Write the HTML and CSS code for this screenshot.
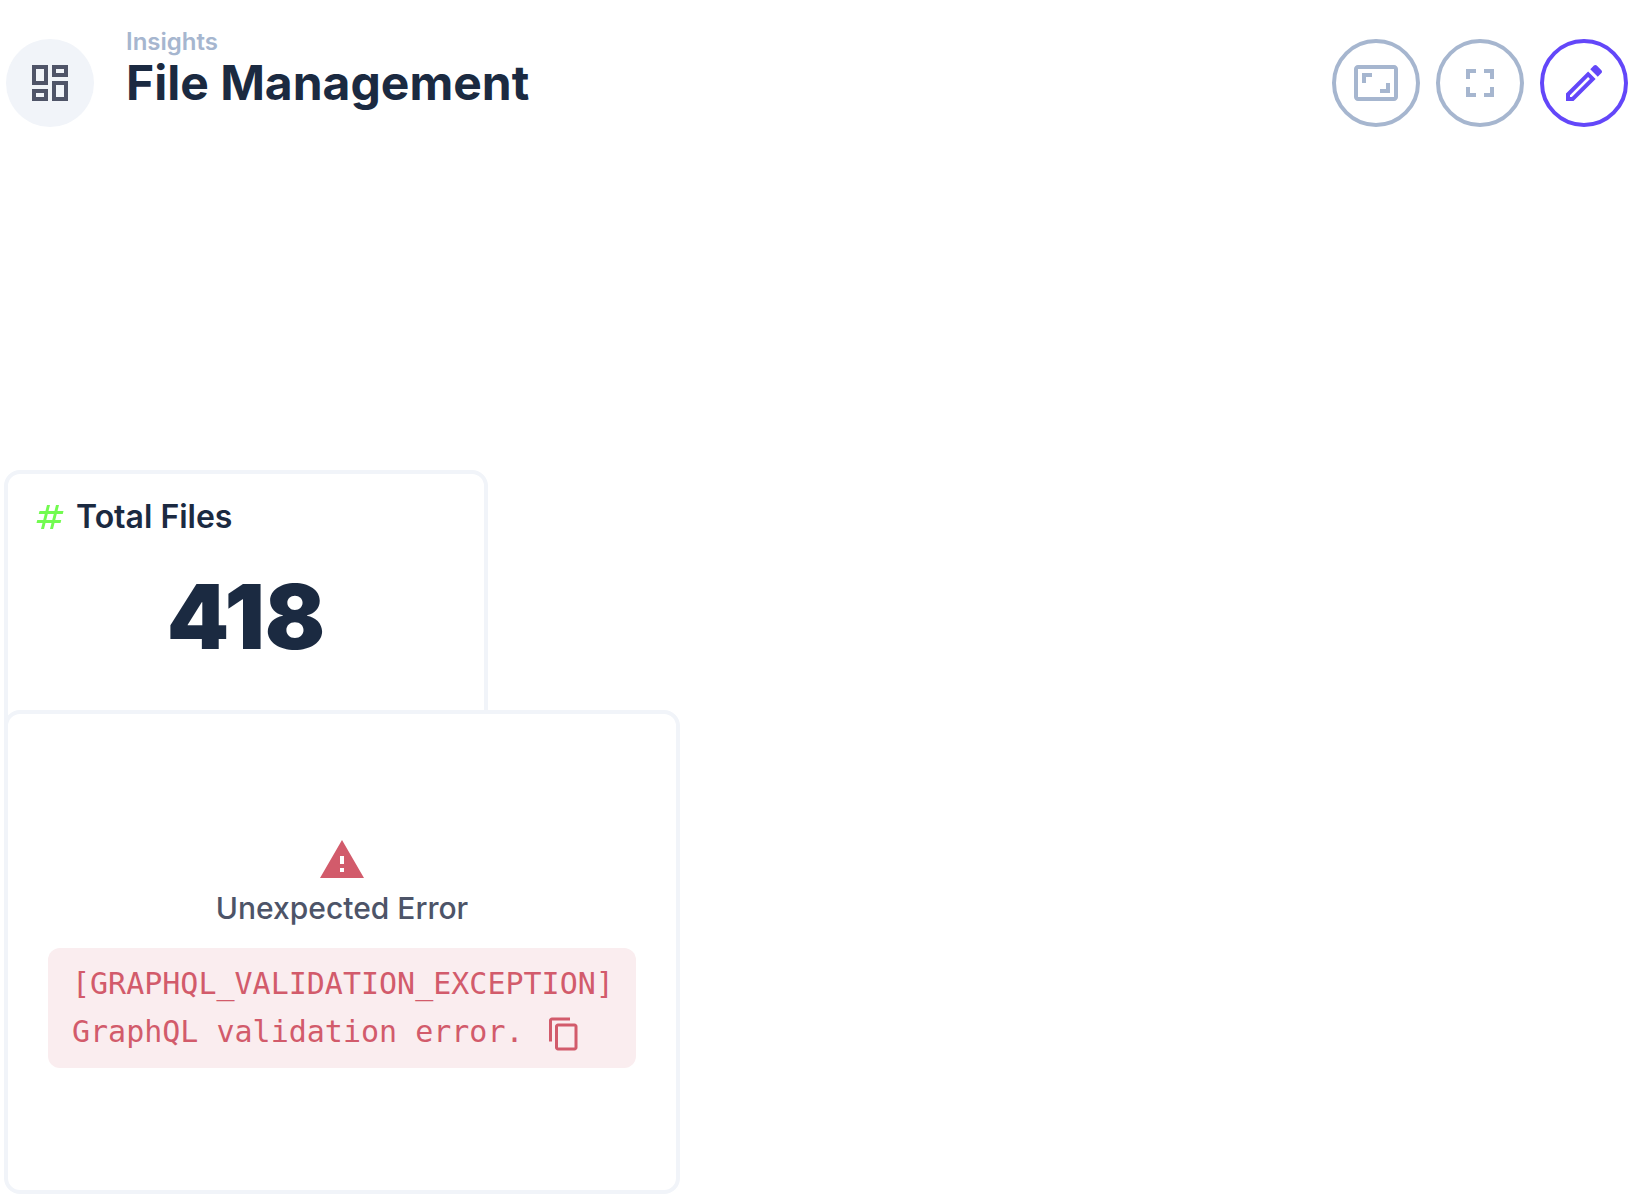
FILE: index.html
```html
<!DOCTYPE html>
<html lang="en">
<head>
<meta charset="utf-8">
<title>File Management</title>
<link rel="stylesheet" href="styles.css">
</head>
<body>
<header class="header">
  <div class="title-group">
    <span class="avatar">
      <svg class="icon-48" viewBox="0 0 24 24"><path d="M19 5v2h-4V5h4M9 5v6H5V5h4m10 8v6h-4v-6h4M9 17v2H5v-2h4M21 3h-8v6h8V3zM11 3H3v10h8V3zm10 8h-8v10h8V11zm-10 4H3v6h8v-6z"/></svg>
    </span>
    <div class="titles">
      <div class="eyebrow">Insights</div>
      <h1 class="title">File Management</h1>
    </div>
  </div>
  <div class="actions">
    <button class="round-btn"><svg class="icon-48" viewBox="0 0 24 24"><path d="M19 12h-2v3h-3v2h5v-5zM7 9h3V7H5v5h2V9zm14-6H3c-1.1 0-2 .9-2 2v14c0 1.1.9 2 2 2h18c1.1 0 2-.9 2-2V5c0-1.1-.9-2-2-2zm0 16.01H3V4.99h18v14.02z"/></svg></button>
    <button class="round-btn"><svg class="icon-48" viewBox="0 0 24 24"><path d="M7 14H5v5h5v-2H7v-3zm-2-4h2V7h3V5H5v5zm12 7h-3v2h5v-5h-2v3zM14 5v2h3v3h2V5h-5z"/></svg></button>
    <button class="round-btn round-btn-primary"><svg class="icon-48" viewBox="0 0 24 24"><path d="M3 17.25V21h3.75L17.81 9.94l-3.75-3.75L3 17.25zM5.92 19H5v-.92l9.06-9.06.92.92L5.92 19zM20.71 5.63l-2.34-2.34c-.39-.39-1.02-.39-1.41 0l-1.83 1.83 3.75 3.75 1.83-1.83c.39-.39.39-1.02 0-1.41z"/></svg></button>
  </div>
</header>
<main class="dashboard">
  <section class="card stat-card">
    <div class="card-head">
      <svg class="icon-hash" viewBox="0 0 24 24"><path d="M20.5 10l.5-2h-4l1-4h-2l-1 4h-4l1-4h-2L9 8H5l-.5 2h4l-1 4h-4L3 16h4l-1 4h2l1-4h4l-1 4h2l1-4h4l.5-2h-4l1-4h4zm-7 4h-4l1-4h4l-1 4z"/></svg>
      <span class="card-title">Total Files</span>
    </div>
    <div class="stat-value">418</div>
  </section>
  <section class="card error-card">
    <svg class="icon-warning" viewBox="0 0 24 24"><path d="M1 21h22L12 2 1 21zm12-3h-2v-2h2v2zm0-4h-2v-4h2v4z"/></svg>
    <div class="error-title">Unexpected Error</div>
    <div class="error-box">[GRAPHQL_VALIDATION_EXCEPTION] GraphQL validation error.<svg class="icon-copy" viewBox="0 0 24 24"><path d="M16 1H4c-1.1 0-2 .9-2 2v14h2V3h12V1zm3 4H8c-1.1 0-2 .9-2 2v14c0 1.1.9 2 2 2h11c1.1 0 2-.9 2-2V7c0-1.1-.9-2-2-2zm0 16H8V7h11v14z"/></svg></div>
  </section>
</main>
</body>
</html>
```
FILE: styles.css
```css
* { box-sizing: border-box; }
html, body { margin: 0; padding: 0; background: #fff; }
body { font-family: Inter, "Noto Sans", sans-serif; height: 1200px; overflow: hidden; padding: 39px 14px 0 4px; }

.header { display: flex; justify-content: space-between; align-items: center; height: 88px; padding-left: 2px; }
.title-group { display: flex; align-items: center; gap: 32px; }
.avatar { width: 88px; height: 88px; border-radius: 50%; background: #f1f4f9; display: flex; align-items: center; justify-content: center; }
.icon-48 { width: 48px; height: 48px; display: block; fill: currentColor; }
.avatar .icon-48 { fill: #4f5468; }
.titles { display: flex; flex-direction: column; margin-top: -28px; }
.eyebrow { font-size: 24px; line-height: 27px; font-weight: 600; color: #a6b6cf; }
.title { margin: 0; font-size: 48px; line-height: 56px; font-weight: 700; color: #1b2a41; }

.actions { display: flex; gap: 16px; }
.round-btn { width: 88px; height: 88px; padding: 0; border-radius: 50%; border: 4px solid #a6b6cf; background: #fff; color: #a6b6cf; display: flex; align-items: center; justify-content: center; }
.round-btn-primary { border-color: #6347f9; color: #6347f9; }

.dashboard { margin-top: 343px; }
.card { background: #fff; border: 4px solid #f1f4f9; border-radius: 16px; }
.stat-card { width: 484px; height: 270px; margin-bottom: -30px; padding: 25px 24px 0; }
.card-head { display: flex; align-items: center; gap: 8px; height: 36px; }
.icon-hash { width: 36px; height: 36px; fill: #72fb50; flex: none; }
.card-title { font-size: 32px; line-height: 36px; font-weight: 600; color: #1b2a41; }
.stat-value { margin-top: 30px; text-align: center; font-size: 89px; line-height: 104px; font-weight: 900; color: #1b2a41; }

.error-card { position: relative; width: 676px; height: 484px; padding-top: 122px; display: flex; flex-direction: column; align-items: center; }
.icon-warning { width: 48px; height: 48px; fill: #d25b6b; display: block; }
.error-title { margin-top: 4px; font-size: 30px; line-height: 40px; font-weight: 500; color: #4d5468; }
.error-box { margin-top: 20px; width: 588px; padding: 12px 24px; border-radius: 12px; background: #faedef; color: #d25b6b; font-family: "DejaVu Sans Mono", "Liberation Mono", monospace; font-size: 30px; line-height: 48px; }
.icon-copy { width: 36px; height: 36px; margin: 8px 0 0 22px; vertical-align: top; fill: #d25b6b; }
```
